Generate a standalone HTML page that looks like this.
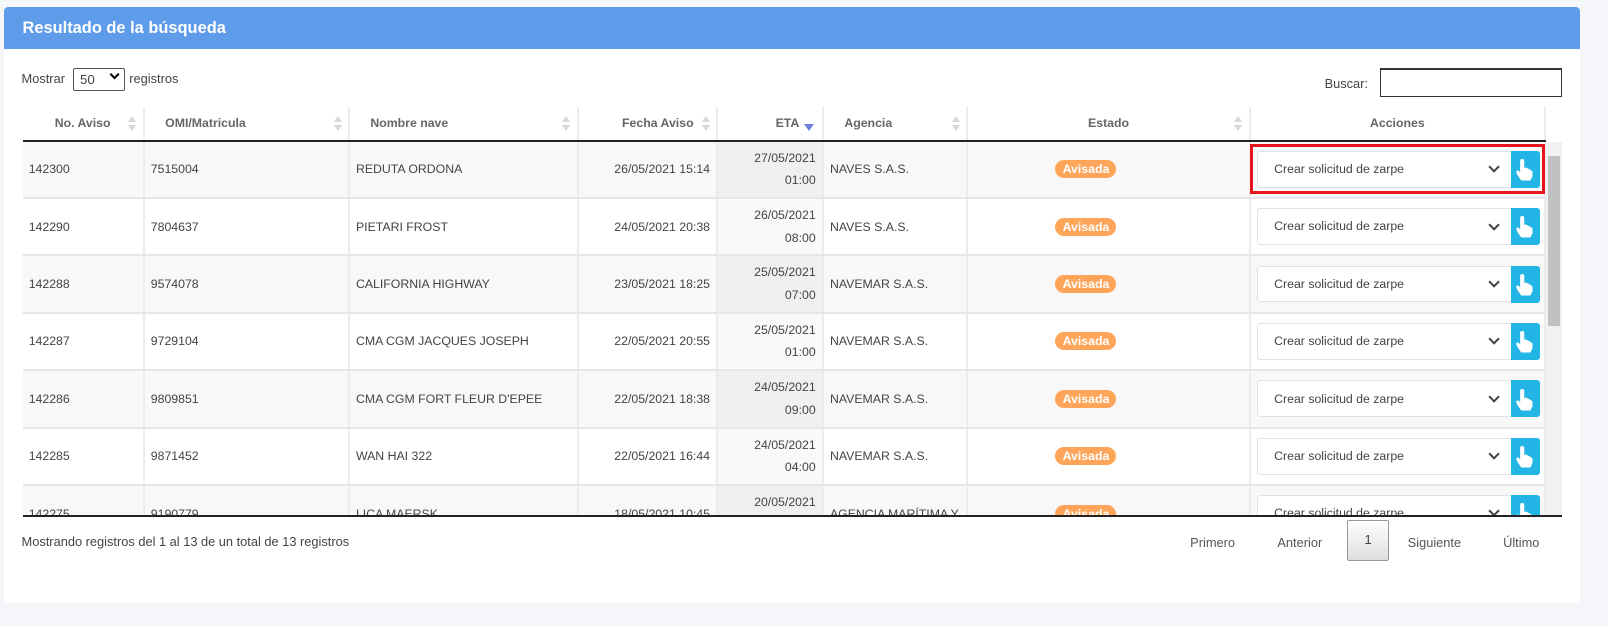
<!DOCTYPE html>
<html><head><meta charset="utf-8"><style>
html,body{margin:0;padding:0;background:#f4f6f9;overflow:hidden}
body{width:1570px;height:610px;zoom:1.026;font-family:"Liberation Sans",sans-serif;color:#444;position:relative}
.panel{position:absolute;left:4px;top:7px;width:1536px;height:581px;background:#fff;border-radius:4px;overflow:hidden}
.hdr{height:41px;background:#5e9be9;color:#fff;font-weight:bold;font-size:16px;line-height:41px;padding-left:18px}
.abs{position:absolute}
.t{font-size:12.5px}
table{border-collapse:collapse;table-layout:fixed}
td,th{border-right:2px solid #ececec;font-size:12px;padding:0 6px;overflow:hidden;white-space:nowrap}
th{height:32px;color:#666;font-weight:bold;position:relative;border-bottom:2px solid #222}
td{height:54px;border-bottom:2px solid #e6e6e6}
tr.o td{background:#f8f8f8}
tr.o td.eta{background:#f0f0f0}
td.eta{background:#f9f9f9;text-align:right;line-height:22px;white-space:normal}
.r{text-align:right}.c{text-align:center}
td.st{padding-right:50px}
.sort:after{content:"";position:absolute;right:6px;top:9px;border:4px solid transparent;border-bottom:6px solid #d6d6d6;border-top:0}
.sort:before{content:"";position:absolute;right:6px;top:18px;border:4px solid transparent;border-top:6px solid #d6d6d6;border-bottom:0}
.badge{display:inline-block;background:#fea55a;color:#fff;font-weight:bold;font-size:12px;border-radius:9px;padding:2px 7px}
.act{position:relative;height:34px;border:1px solid #dfe3e8;border-radius:3px;width:274px;background:#fff}
.act span{position:absolute;left:16px;top:10px;font-size:12px;color:#444}
.act i{position:absolute;right:40px;top:11px;width:6px;height:6px;border-right:2px solid #444;border-bottom:2px solid #444;transform:rotate(45deg)}
.act b{position:absolute;right:-1px;top:-1px;width:28px;height:36px;background:#22b5e6;border-radius:0 3px 3px 0}
.act svg{position:absolute;right:4px;top:7px}
</style></head><body>
<div class="panel"><div class="hdr">Resultado de la búsqueda</div></div>
<div class="abs t" style="left:21px;top:69px">Mostrar</div>
<div class="abs" style="left:71px;top:66px;width:49px;height:21px;border:1px solid #555;border-radius:2px;background:#fff;font-size:13px"><span style="position:absolute;left:6px;top:3px">50</span><span style="position:absolute;right:6px;top:2px;width:5px;height:5px;border-right:2px solid #000;border-bottom:2px solid #000;transform:rotate(45deg)"></span></div>
<div class="abs t" style="left:126px;top:69px">registros</div>
<div class="abs t" style="left:1291px;top:74px">Buscar:</div>
<div class="abs" style="left:1345px;top:66px;width:175px;height:26px;border:1px solid #333;border-top-width:2px;background:#fff"></div>
<div class="abs" style="left:22px;top:104px;width:1500px;height:398px;overflow:hidden;border-bottom:2px solid #222">
<table style="width:1484px">
<colgroup><col style="width:118px"><col style="width:200px"><col style="width:223px"><col style="width:136px"><col style="width:103px"><col style="width:141px"><col style="width:275px"><col style="width:288px"></colgroup>
<tr><th class="sort c">No. Aviso</th><th class="sort" style="text-align:left;padding-left:20px">OMI/Matricula</th><th class="sort" style="text-align:left;padding-left:20px">Nombre nave</th><th class="sort r" style="padding-right:22px">Fecha Aviso</th><th class="r" style="padding-right:22px;position:relative">ETA<span style="position:absolute;right:8px;top:17px;border:5px solid transparent;border-top:7px solid #6f7fe0;border-bottom:0"></span></th><th class="sort" style="text-align:left;padding-left:20px">Agencia</th><th class="sort c">Estado</th><th class="c">Acciones</th></tr>
</table>
<div style="position:absolute;left:1485px;top:34px;width:15px;height:364px;background:#f1f1f1"><div style="position:absolute;left:2px;top:14px;width:11px;height:166px;background:#c1c1c1"></div></div>
<table style="width:1484px;position:absolute;top:34px;left:0">
<colgroup><col style="width:118px"><col style="width:200px"><col style="width:223px"><col style="width:136px"><col style="width:103px"><col style="width:141px"><col style="width:275px"><col style="width:288px"></colgroup>
<tr class="o"><td>142300</td><td>7515004</td><td>REDUTA ORDONA</td><td class="r">26/05/2021 15:14</td><td class="eta">27/05/2021<br>01:00</td><td>NAVES S.A.S.</td><td class="c st"><span class="badge">Avisada</span></td><td><div class="act"><span>Crear solicitud de zarpe</span><i></i><b></b><svg width="20" height="22" viewBox="0 0 20 22"><path d="M6 2a2 2 0 0 1 4 0v7l1-1 2 1 2 1 3 2v5l-2 4H7l-4-6-1-3 2-1 2 2z" fill="#fff"/></svg></div></td></tr>
<tr><td>142290</td><td>7804637</td><td>PIETARI FROST</td><td class="r">24/05/2021 20:38</td><td class="eta">26/05/2021<br>08:00</td><td>NAVES S.A.S.</td><td class="c st"><span class="badge">Avisada</span></td><td><div class="act"><span>Crear solicitud de zarpe</span><i></i><b></b><svg width="20" height="22" viewBox="0 0 20 22"><path d="M6 2a2 2 0 0 1 4 0v7l1-1 2 1 2 1 3 2v5l-2 4H7l-4-6-1-3 2-1 2 2z" fill="#fff"/></svg></div></td></tr>
<tr class="o"><td>142288</td><td>9574078</td><td>CALIFORNIA HIGHWAY</td><td class="r">23/05/2021 18:25</td><td class="eta">25/05/2021<br>07:00</td><td>NAVEMAR S.A.S.</td><td class="c st"><span class="badge">Avisada</span></td><td><div class="act"><span>Crear solicitud de zarpe</span><i></i><b></b><svg width="20" height="22" viewBox="0 0 20 22"><path d="M6 2a2 2 0 0 1 4 0v7l1-1 2 1 2 1 3 2v5l-2 4H7l-4-6-1-3 2-1 2 2z" fill="#fff"/></svg></div></td></tr>
<tr><td>142287</td><td>9729104</td><td>CMA CGM JACQUES JOSEPH</td><td class="r">22/05/2021 20:55</td><td class="eta">25/05/2021<br>01:00</td><td>NAVEMAR S.A.S.</td><td class="c st"><span class="badge">Avisada</span></td><td><div class="act"><span>Crear solicitud de zarpe</span><i></i><b></b><svg width="20" height="22" viewBox="0 0 20 22"><path d="M6 2a2 2 0 0 1 4 0v7l1-1 2 1 2 1 3 2v5l-2 4H7l-4-6-1-3 2-1 2 2z" fill="#fff"/></svg></div></td></tr>
<tr class="o"><td>142286</td><td>9809851</td><td>CMA CGM FORT FLEUR D'EPEE</td><td class="r">22/05/2021 18:38</td><td class="eta">24/05/2021<br>09:00</td><td>NAVEMAR S.A.S.</td><td class="c st"><span class="badge">Avisada</span></td><td><div class="act"><span>Crear solicitud de zarpe</span><i></i><b></b><svg width="20" height="22" viewBox="0 0 20 22"><path d="M6 2a2 2 0 0 1 4 0v7l1-1 2 1 2 1 3 2v5l-2 4H7l-4-6-1-3 2-1 2 2z" fill="#fff"/></svg></div></td></tr>
<tr><td>142285</td><td>9871452</td><td>WAN HAI 322</td><td class="r">22/05/2021 16:44</td><td class="eta">24/05/2021<br>04:00</td><td>NAVEMAR S.A.S.</td><td class="c st"><span class="badge">Avisada</span></td><td><div class="act"><span>Crear solicitud de zarpe</span><i></i><b></b><svg width="20" height="22" viewBox="0 0 20 22"><path d="M6 2a2 2 0 0 1 4 0v7l1-1 2 1 2 1 3 2v5l-2 4H7l-4-6-1-3 2-1 2 2z" fill="#fff"/></svg></div></td></tr>
<tr class="o"><td>142275</td><td>9190779</td><td>LICA MAERSK</td><td class="r">18/05/2021 10:45</td><td class="eta">20/05/2021<br>15:00</td><td>AGENCIA MARÍTIMA Y</td><td class="c st"><span class="badge">Avisada</span></td><td><div class="act"><span>Crear solicitud de zarpe</span><i></i><b></b><svg width="20" height="22" viewBox="0 0 20 22"><path d="M6 2a2 2 0 0 1 4 0v7l1-1 2 1 2 1 3 2v5l-2 4H7l-4-6-1-3 2-1 2 2z" fill="#fff"/></svg></div></td></tr>
</table>
</div>
<div class="abs" style="left:1218px;top:140px;width:282px;height:43px;border:3px solid #e8141d"></div>
<div class="abs t" style="left:21px;top:520px">Mostrando registros del 1 al 13 de un total de 13 registros</div>
<div class="abs t" style="left:1160px;top:521px;color:#555">Primero</div>
<div class="abs t" style="left:1245px;top:521px;color:#555">Anterior</div>
<div class="abs" style="left:1313px;top:507px;width:39px;height:38px;border:1px solid #999;border-radius:2px;background:linear-gradient(#fff,#ddd);font-size:13px;text-align:center;line-height:38px">1</div>
<div class="abs t" style="left:1372px;top:521px;color:#555">Siguiente</div>
<div class="abs t" style="left:1465px;top:521px;color:#555">Último</div>
</body></html>
